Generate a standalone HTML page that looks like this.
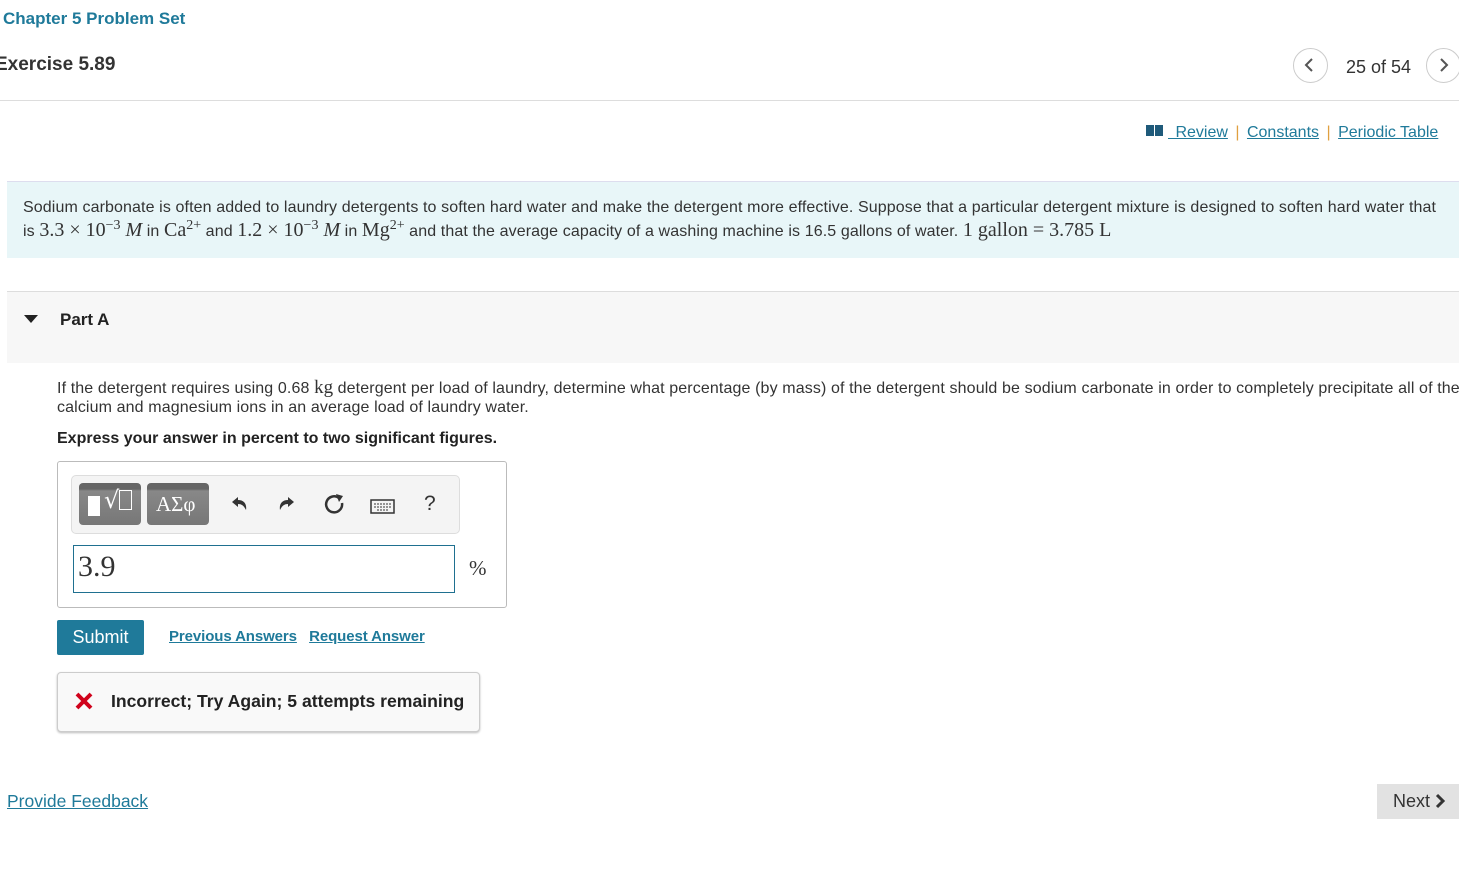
<!DOCTYPE html>
<html><head><meta charset="utf-8"><style>
body{margin:0;width:1459px;height:875px;background:#fff;font-family:"Liberation Sans",Arial,sans-serif;color:#333;position:relative;overflow:hidden}
.a{position:absolute;white-space:nowrap}
.m{font-family:"Liberation Serif",serif;font-size:20px;letter-spacing:0}
.m sup{font-size:14px;line-height:0;vertical-align:7px}
a{color:#1f7a9a}
.lnk{color:#1f7a9a;text-decoration:underline}
</style></head><body>
<div class="a" style="left:3px;top:9px;font-size:17px;font-weight:bold;color:#1f7a9a">Chapter 5 Problem Set</div>
<div class="a" style="left:-5px;top:54px;font-size:19px;font-weight:bold;color:#333">Exercise 5.89</div>
<div class="a" style="left:1293px;top:48px;width:33px;height:33px;border:1px solid #ccc;border-radius:50%"></div>
<svg class="a" style="left:1302px;top:57px" width="16" height="16"><path d="M10 2 L4 8 L10 14" fill="none" stroke="#555" stroke-width="2"/></svg>
<div class="a" style="left:1346px;top:57px;font-size:18px;color:#333">25 of 54</div>
<div class="a" style="left:1426px;top:48px;width:33px;height:33px;border:1px solid #ccc;border-radius:50%"></div>
<svg class="a" style="left:1436px;top:57px" width="16" height="16"><path d="M5 2 L11 8 L5 14" fill="none" stroke="#555" stroke-width="2"/></svg>
<div class="a" style="left:0;top:100px;width:1459px;height:1px;background:#ddd"></div>
<svg class="a" style="left:1146px;top:125px" width="18" height="12"><rect x="0" y="0" width="8" height="11" fill="#1f5a7a"/><rect x="9" y="0" width="8" height="11" fill="#1f5a7a"/></svg>
<div class="a" style="left:1168px;top:124px;font-size:16px;color:#1f7a9a;word-spacing:3px"><span class="lnk">&nbsp;Review</span> <span style="color:#e0a040">|</span> <span class="lnk" style="word-spacing:0">Constants</span> <span style="color:#e0a040">|</span> <span class="lnk" style="word-spacing:0">Periodic Table</span></div>
<div class="a" style="left:7px;top:181px;width:1452px;height:76px;background:#e8f6f8;border-top:1px solid #dde"></div>
<div class="a" style="left:23px;top:199px;font-size:16px;color:#333;letter-spacing:0.11px">Sodium carbonate is often added to laundry detergents to soften hard water and make the detergent more effective. Suppose that a particular detergent mixture is designed to soften hard water that</div>
<div class="a" style="left:23px;top:219px;font-size:16px;color:#333;letter-spacing:0.11px">is <span class="m">3.3 × 10<sup>−3</sup> <i>M</i></span> in <span class="m">Ca<sup>2+</sup></span> and <span class="m">1.2 × 10<sup>−3</sup> <i>M</i></span> in <span class="m">Mg<sup>2+</sup></span> and that the average capacity of a washing machine is 16.5 gallons of water. <span class="m">1 gallon = 3.785 L</span></div>
<div class="a" style="left:7px;top:291px;width:1452px;height:71px;background:#f7f7f7;border-top:1px solid #ddd"></div>
<svg class="a" style="left:24px;top:315px" width="14" height="10"><path d="M0 0 L14 0 L7 8Z" fill="#222"/></svg>
<div class="a" style="left:60px;top:310px;font-size:17px;font-weight:bold;color:#222">Part A</div>
<div class="a" style="left:57px;top:377px;font-size:16px;color:#333;letter-spacing:0.12px">If the detergent requires using 0.68 <span class="m" style="font-size:19px">kg</span> detergent per load of laundry, determine what percentage (by mass) of the detergent should be sodium carbonate in order to completely precipitate all of the</div>
<div class="a" style="left:57px;top:399px;font-size:16px;color:#333;letter-spacing:0.12px">calcium and magnesium ions in an average load of laundry water.</div>
<div class="a" style="left:57px;top:430px;font-size:16px;font-weight:bold;color:#222">Express your answer in percent to two significant figures.</div>
<div class="a" style="left:57px;top:461px;width:448px;height:145px;border:1px solid #bbb;border-radius:3px"></div>
<div class="a" style="left:71px;top:475px;width:387px;height:57px;background:#f4f4f4;border:1px solid #ddd;border-radius:5px"></div>
<div class="a" style="left:79px;top:483px;width:62px;height:42px;border-radius:4px;background:linear-gradient(#666 0,#666 6px,#888 8px,#777)"></div>
<div class="a" style="left:88px;top:496px;width:12px;height:20px;background:#fff"></div>
<div class="a" style="left:104px;top:486px;font-family:'DejaVu Sans';font-size:24px;color:#fff">√<span style="display:inline-block;width:11px;height:18px;border:1px solid #fff;vertical-align:-2px"></span></div>
<div class="a" style="left:147px;top:483px;width:62px;height:42px;border-radius:4px;background:linear-gradient(#666 0,#666 6px,#888 8px,#777)"></div>
<div class="a" style="left:156px;top:492px;font-family:'Liberation Serif';font-size:21px;color:#fff">ΑΣφ</div>
<svg class="a" style="left:229px;top:494px" width="20" height="20"><path d="M3 8 L9 3 L9 6 C15 6 18 10 17 16 C15 12 13 10 9 10 L9 13Z" fill="#333"/></svg>
<svg class="a" style="left:277px;top:494px" width="20" height="20"><path d="M17 8 L11 3 L11 6 C5 6 2 10 3 16 C5 12 7 10 11 10 L11 13Z" fill="#333"/></svg>
<svg class="a" style="left:324px;top:493px" width="22" height="22"><path d="M15 5 A8 8 0 1 0 18 10" fill="none" stroke="#333" stroke-width="2.5"/><path d="M12 1 L19 3 L15 9Z" fill="#333"/></svg>
<svg class="a" style="left:370px;top:498px" width="26" height="18"><rect x="1" y="2" width="23" height="13" fill="none" stroke="#333" stroke-width="1.5"/><path d="M4 6h17M4 9h17M7 12h11" stroke="#333" stroke-dasharray="2 1"/></svg>
<div class="a" style="left:424px;top:492px;font-size:21px;color:#333">?</div>
<div class="a" style="left:73px;top:545px;width:380px;height:46px;border:1px solid #1f7090"></div>
<div class="a" style="left:78px;top:550px;font-family:'Liberation Serif';font-size:30px;color:#333">3.9</div>
<div class="a" style="left:469px;top:556px;font-family:'Liberation Serif';font-size:21px;color:#333">%</div>
<div class="a" style="left:57px;top:620px;width:87px;height:35px;background:#1f7a9a;border-radius:2px;color:#fff;font-size:18px;text-align:center;line-height:34px">Submit</div>
<div class="a" style="left:169px;top:628px;font-size:15px;font-weight:bold;letter-spacing:-0.1px"><span class="lnk">Previous Answers</span>&nbsp;&nbsp;&nbsp;<span class="lnk">Request Answer</span></div>
<div class="a" style="left:57px;top:672px;width:421px;height:58px;background:#f9f9f9;border:1px solid #ccc;border-radius:4px;box-shadow:0 1px 2px #bbb"></div>
<svg class="a" style="left:75px;top:692px" width="18" height="18"><path d="M2 2 L16 16 M16 2 L2 16" stroke="#d0021b" stroke-width="4"/></svg>
<div class="a" style="left:111px;top:691px;font-size:17.6px;font-weight:bold;color:#222">Incorrect; Try Again; 5 attempts remaining</div>
<div class="a lnk" style="left:7px;top:791px;font-size:17.5px">Provide Feedback</div>
<div class="a" style="left:1377px;top:784px;width:82px;height:35px;background:#e2e2e2"></div>
<div class="a" style="left:1393px;top:791px;font-size:18px;color:#333">Next</div>
<svg class="a" style="left:1434px;top:793px" width="12" height="16"><path d="M3 2 L9 8 L3 14" fill="none" stroke="#333" stroke-width="3"/></svg>
</body></html>
